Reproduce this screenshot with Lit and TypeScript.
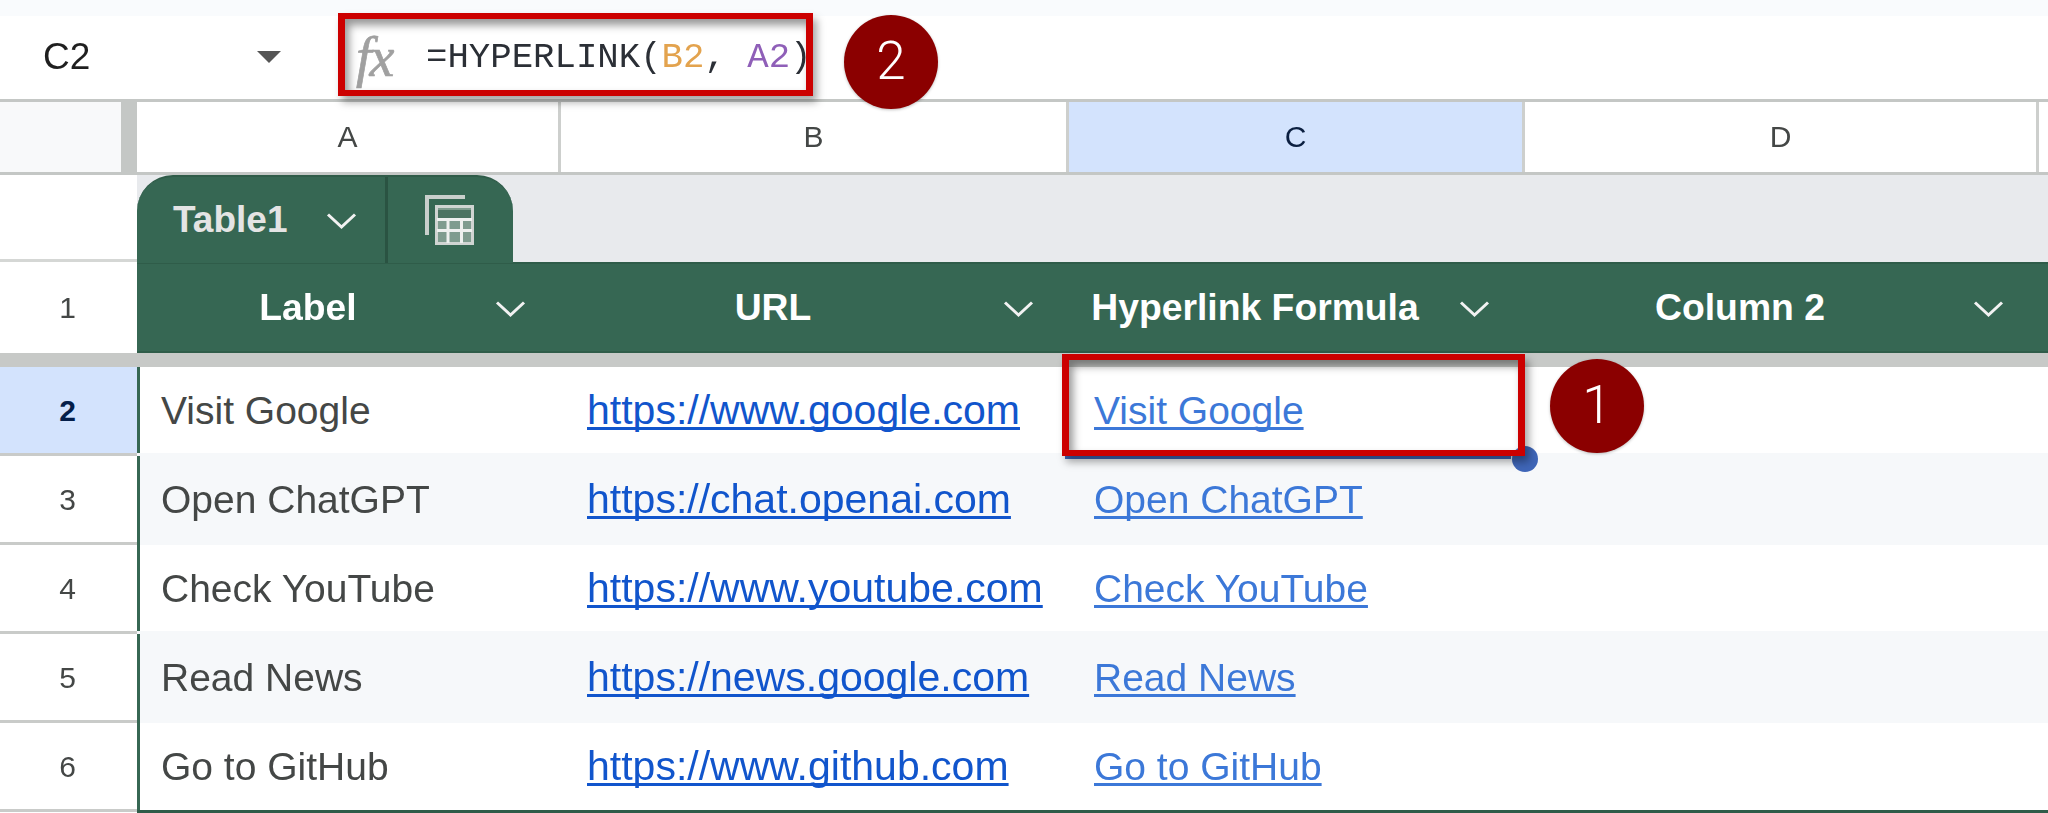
import { LitElement, html, css, svg } from "lit";
import { customElement } from "lit/decorators.js";

const ROWS = [
  ["2", "Visit Google", "https://www.google.com"],
  ["3", "Open ChatGPT", "https://chat.openai.com"],
  ["4", "Check YouTube", "https://www.youtube.com"],
  ["5", "Read News", "https://news.google.com"],
  ["6", "Go to GitHub", "https://www.github.com"],
];
const HEADS = ["Label", "URL", "Hyperlink Formula", "Column 2"];

const chevron = svg`<svg class="chev" viewBox="0 0 31 18" width="31" height="18" aria-hidden="true"><path d="M2 2.5 L15.5 15 L29 2.5" fill="none" stroke="#f2f2f2" stroke-width="3"/></svg>`;
const calc = svg`<svg viewBox="0 0 50 50" width="50" height="50" aria-hidden="true">
  <path d="M40 2H2V40" fill="none" stroke="#c9cfcc" stroke-width="4"/>
  <rect x="11.5" y="11.5" width="36" height="37" fill="#7f9c8f" stroke="#d0d4d2" stroke-width="3"/>
  <rect x="13" y="15" width="33" height="8" fill="#4c7462"/>
  <path d="M12 24.5H47M12 35.5H47M23 25V48M36.5 25V48" fill="none" stroke="#eef0ef" stroke-width="3"/>
</svg>`;

@customElement("app-root")
export class AppRoot extends LitElement {
  static styles = css`
    :host { display: block; width: 2048px; height: 813px; overflow: hidden; background: #fff;
      font-family: "Liberation Sans", Arial, sans-serif; color: #444746; }
    .sheet { position: relative; width: 2048px; height: 813px; overflow: hidden; filter: blur(0.55px); }
    .strip { height: 16px; background: #f9fbfd; }
    .fbar { height: 83px; display: flex; align-items: center; border-bottom: 3px solid #c4c7c5; background: #fff; }
    .name { width: 353px; box-sizing: border-box; padding-left: 43px; font-size: 37px; color: #1f1f1f; display: flex; align-items: center; position: relative; top: -1px; }
    .name span { width: 214px; }
    .arrow { width: 0; height: 0; border-left: 12px solid transparent; border-right: 12px solid transparent; border-top: 12px solid #555; }
    .fx { width: 73px; box-sizing: border-box; padding-left: 3px; font: italic 56px "Liberation Serif", serif; color: #a0a0a0; -webkit-text-stroke: 0.7px #a0a0a0; letter-spacing: -2px; position: relative; top: -1px; }
    .formula { font: 35.7px "Liberation Mono", monospace; color: #2b2f36; white-space: pre; }
    .o { color: #e3a34e; } .p { color: #8f5fb8; }

    .grid { display: grid; grid-template-columns: 137px 422px 508px 456px 514px 11px; }
    .cols { height: 70px; border-bottom: 3px solid #c4c7c5; grid-template-columns: 137px 424px 508px 456px 514px 9px; }
    .corner { background: #f8f9fa; border-right: 16px solid #c4c7c5; box-sizing: border-box; }
    .ch { display: flex; align-items: center; justify-content: center; font-size: 30px; border-right: 3px solid #cdcfcd; box-sizing: border-box; }
    .ch.sel { background: #d3e3fd; color: #0b1f40; }

    .tabrow { display: flex; height: 87px; }
    .tabgut { width: 137px; box-sizing: border-box; border-bottom: 3px solid #d5d7d5; background: #fff; }
    .tabband { flex: 1; background: #e8eaed; }
    .tab { width: 376px; height: 88px; box-sizing: border-box; background: #366753; border-radius: 36px 36px 0 0; border-top: 2px solid #2f5c49; display: flex; color: #e4e4e4; position: relative; }
    .tabname { width: 251px; box-sizing: border-box; padding-left: 36px; border-right: 3px solid #2a5342; display: flex; align-items: center; font-size: 37px; font-weight: bold; }
    .tabname span { width: 153px; }
    .tabicon { flex: 1; display: flex; align-items: center; justify-content: center; padding-right: 2px; }

    .hrow { height: 91px; }
    .rn { display: flex; align-items: center; justify-content: center; font-size: 30px; padding-right: 2px; box-sizing: border-box; }
    .hc { background: #366753; border-top: 2px solid #2f5c49; border-bottom: 2px solid #2f5c49; display: flex; align-items: center; padding-right: 33px; gap: 16px; color: #fff; font-size: 37.3px; font-weight: bold; box-sizing: border-box; min-width: 0; }
    .hc span { flex: 1; text-align: center; white-space: nowrap; }
    .chev { flex: none; margin-top: 2px; }
    .hc.last { padding: 0; }
    .band { height: 14px; background: #c7c9c7; }

    .row { height: 89px; position: relative; }
    .row .rn { border-bottom: 3px solid #c9cbc9; padding-top: 2px; }
    .row.sel .rn { background: #d3e3fd; color: #041e49; font-weight: bold; }
    .c { display: flex; align-items: center; font-size: 39px; white-space: nowrap; padding-bottom: 2px; box-sizing: border-box; min-width: 0; background: #fff; }
    .row.alt .c { background: #f6f8fa; box-shadow: 0 -3px 0 #f6f8fa; }
    .a { padding-left: 21px; border-left: 3px solid #366753; color: #444746; }
    .b { padding-left: 28px; font-size: 41px; padding-bottom: 3px; }
    .cc { padding-left: 27px; }
    a { text-decoration: underline; text-decoration-thickness: 3px; text-underline-offset: 3px; text-decoration-skip-ink: none; }
    .b a { color: #1155cc; }
    .cc a { color: #3c78d8; }
    .foot { position: absolute; left: 137px; right: 0; bottom: 0; height: 3px; background: #2f5c49; }

    .blueline { position: absolute; left: 1065px; top: 456px; width: 446px; height: 3px; background: #3f66b8; }
    .dot { position: absolute; left: 1512px; top: 446px; width: 26px; height: 26px; border-radius: 50%; background: #3f66b8; }
    .mark { position: absolute; box-sizing: border-box; border-style: solid; border-color: #cc0000; border-width: 6px 7px;
      box-shadow: 4px 6px 8px rgba(0,0,0,.35), inset 4px 6px 8px rgba(0,0,0,.42); }
    .m1 { left: 1062px; top: 354px; width: 463px; height: 102px; }
    .m2 { left: 338px; top: 13px; width: 475px; height: 83px; }
    .badge { position: absolute; width: 94px; height: 94px; padding-bottom: 3px; box-sizing: border-box; border-radius: 50%; background: #8b0000; color: #fff; font: 300 53px Roboto, "Liberation Sans", sans-serif; display: flex; align-items: center; justify-content: center; box-shadow: 0 1px 3px rgba(0,0,0,.25); }
    .b1 { left: 1550px; top: 359px; }
    .b2 { left: 844px; top: 15px; }
  `;

  render() {
    return html`<div class="sheet">
      <div class="strip"></div>
      <div class="fbar">
        <div class="name"><span>C2</span><i class="arrow"></i></div>
        <div class="fx">fx</div>
        <div class="formula">=HYPERLINK(<span class="o">B2</span>, <span class="p">A2</span>)</div>
      </div>
      <div class="grid cols">
        <div class="corner"></div>
        <div class="ch">A</div><div class="ch">B</div><div class="ch sel">C</div><div class="ch">D</div><div></div>
      </div>
      <div class="tabrow">
        <div class="tabgut"></div>
        <div class="tabband">
          <div class="tab">
            <div class="tabname"><span>Table1</span>${chevron}</div>
            <div class="tabicon">${calc}</div>
          </div>
        </div>
      </div>
      <div class="grid hrow">
        <div class="rn">1</div>
        ${HEADS.map((h) => html`<div class="hc"><span>${h}</span>${chevron}</div>`)}
        <div class="hc last"></div>
      </div>
      <div class="band"></div>
      ${ROWS.map(([n, label, url], i) => html`
        <div class="grid row ${i === 0 ? "sel" : ""} ${i % 2 === 1 ? "alt" : ""}">
          <div class="rn">${n}</div>
          <div class="c a">${label}</div>
          <div class="c b"><a>${url}</a></div>
          <div class="c cc"><a>${label}</a></div>
          <div class="c"></div>
          <div class="c"></div>
        </div>`)}
      <div class="foot"></div>
      <div class="blueline"></div>
      <div class="dot"></div>
      <div class="mark m1"></div>
      <div class="mark m2"></div>
      <div class="badge b1">1</div>
      <div class="badge b2">2</div>
    </div>`;
  }
}
